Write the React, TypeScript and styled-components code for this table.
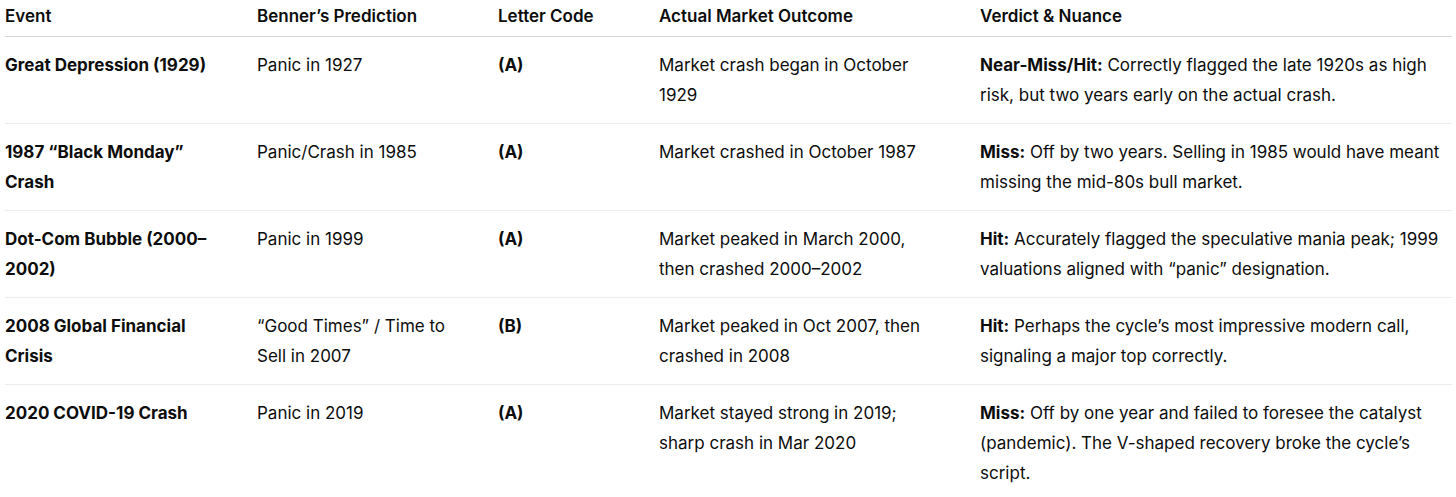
import React from "react";
import styled, { createGlobalStyle } from "styled-components";

const GlobalStyle = createGlobalStyle`
  html, body {
    margin: 0;
    padding: 0;
    background: #ffffff;
  }
  body {
    font-family: Inter, "Noto Sans", "Liberation Sans", sans-serif;
    color: #0d0d0d;
    -webkit-font-smoothing: antialiased;
  }
  *, *::before, *::after {
    box-sizing: border-box;
  }
`;

const Page = styled.div`
  padding-left: 5px;
  width: 1456px;
`;

const Table = styled.table`
  width: 1447px;
  table-layout: fixed;
  border-collapse: collapse;
  font-size: 17px;
  line-height: 30px;
`;

const HeadCell = styled.th<{ $w: number }>`
  width: ${(p) => p.$w}px;
  text-align: left;
  font-weight: 600;
  padding: 1px 16px 5px 0;
  border-bottom: 1.5px solid #d6d6d6;
  vertical-align: top;
  white-space: nowrap;
`;

const Row = styled.tr`
  border-bottom: 1px solid #ececec;
  &:last-child {
    border-bottom: none;
  }
`;

const Cell = styled.td<{ $strong?: boolean; $pad: number }>`
  padding: 13px ${(p) => p.$pad}px 13px 0;
  vertical-align: top;
  font-weight: ${(p) => (p.$strong ? 700 : 400)};
`;

const Lead = styled.strong`
  font-weight: 700;
`;

const columns = [
  { title: "Event", w: 252 },
  { title: "Benner\u2019s Prediction", w: 241 },
  { title: "Letter Code", w: 161 },
  { title: "Actual Market Outcome", w: 321 },
  { title: "Verdict & Nuance", w: 472 },
];

const rows = [
  {
    event: "Great Depression (1929)",
    prediction: "Panic in 1927",
    code: "(A)",
    outcome: "Market crash began in October 1929",
    lead: "Near-Miss/Hit:",
    verdict:
      "Correctly flagged the late 1920s as high risk, but two years early on the actual crash.",
  },
  {
    event: "1987 \u201cBlack Monday\u201d Crash",
    prediction: "Panic/Crash in 1985",
    code: "(A)",
    outcome: "Market crashed in October 1987",
    lead: "Miss:",
    verdict:
      "Off by two years. Selling in 1985 would have meant missing the mid-80s bull market.",
  },
  {
    event: "Dot-Com Bubble (2000\u20132002)",
    prediction: "Panic in 1999",
    code: "(A)",
    outcome: "Market peaked in March 2000, then crashed 2000\u20132002",
    lead: "Hit:",
    verdict:
      "Accurately flagged the speculative mania peak; 1999 valuations aligned with \u201cpanic\u201d designation.",
  },
  {
    event: "2008 Global Financial Crisis",
    prediction: "\u201cGood Times\u201d / Time to Sell in 2007",
    code: "(B)",
    outcome: "Market peaked in Oct 2007, then crashed in 2008",
    lead: "Hit:",
    verdict:
      "Perhaps the cycle\u2019s most impressive modern call, signaling a major top correctly.",
  },
  {
    event: "2020 COVID-19 Crash",
    prediction: "Panic in 2019",
    code: "(A)",
    outcome: "Market stayed strong in 2019; sharp crash in Mar 2020",
    lead: "Miss:",
    verdict:
      "Off by one year and failed to foresee the catalyst (pandemic). The V-shaped recovery broke the cycle\u2019s script.",
  },
];

export default function App() {
  return (
    <Page>
      <GlobalStyle />
      <Table>
        <thead>
          <tr>
            {columns.map((c) => (
              <HeadCell key={c.title} $w={c.w}>
                {c.title}
              </HeadCell>
            ))}
          </tr>
        </thead>
        <tbody>
          {rows.map((r) => (
            <Row key={r.event}>
              <Cell $strong $pad={28}>{r.event}</Cell>
              <Cell $pad={24}>{r.prediction}</Cell>
              <Cell $strong $pad={16}>{r.code}</Cell>
              <Cell $pad={36}>{r.outcome}</Cell>
              <Cell $pad={0}>
                <Lead>{r.lead}</Lead> {r.verdict}
              </Cell>
            </Row>
          ))}
        </tbody>
      </Table>
    </Page>
  );
}
